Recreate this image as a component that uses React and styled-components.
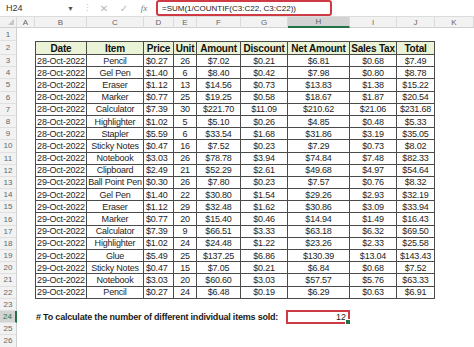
import React from "react";
import styled, { createGlobalStyle, css } from "styled-components";

// --- Global page reset ---
const GlobalStyle = createGlobalStyle`
  html, body {
    margin: 0;
    padding: 0;
    background: #ffffff;
    overflow: hidden;
  }
  body {
    font-family: "Liberation Sans", Arial, sans-serif;
  }
`;

// column widths: row-number, A, B ... J, K
const COLS = "17px 18px 52px 57px 30px 23px 44px 47px 62px 47px 38px 1fr";

const DATA = [
  ["28-Oct-2022", "Pencil", "$0.27", 26, "$7.02", "$0.21", "$6.81", "$0.68", "$7.49"],
  ["28-Oct-2022", "Gel Pen", "$1.40", 6, "$8.40", "$0.42", "$7.98", "$0.80", "$8.78"],
  ["28-Oct-2022", "Eraser", "$1.12", 13, "$14.56", "$0.73", "$13.83", "$1.38", "$15.22"],
  ["28-Oct-2022", "Marker", "$0.77", 25, "$19.25", "$0.58", "$18.67", "$1.87", "$20.54"],
  ["28-Oct-2022", "Calculator", "$7.39", 30, "$221.70", "$11.09", "$210.62", "$21.06", "$231.68"],
  ["28-Oct-2022", "Highlighter", "$1.02", 5, "$5.10", "$0.26", "$4.85", "$0.48", "$5.33"],
  ["28-Oct-2022", "Stapler", "$5.59", 6, "$33.54", "$1.68", "$31.86", "$3.19", "$35.05"],
  ["28-Oct-2022", "Sticky Notes", "$0.47", 16, "$7.52", "$0.23", "$7.29", "$0.73", "$8.02"],
  ["28-Oct-2022", "Notebook", "$3.03", 26, "$78.78", "$3.94", "$74.84", "$7.48", "$82.33"],
  ["28-Oct-2022", "Clipboard", "$2.49", 21, "$52.29", "$2.61", "$49.68", "$4.97", "$54.64"],
  ["29-Oct-2022", "Ball Point Pen", "$0.30", 26, "$7.80", "$0.23", "$7.57", "$0.76", "$8.32"],
  ["29-Oct-2022", "Gel Pen", "$1.40", 22, "$30.80", "$1.54", "$29.26", "$2.93", "$32.19"],
  ["29-Oct-2022", "Eraser", "$1.12", 29, "$32.48", "$1.62", "$30.86", "$3.09", "$33.94"],
  ["29-Oct-2022", "Marker", "$0.77", 20, "$15.40", "$0.46", "$14.94", "$1.49", "$16.43"],
  ["29-Oct-2022", "Calculator", "$7.39", 9, "$66.51", "$3.33", "$63.18", "$6.32", "$69.50"],
  ["29-Oct-2022", "Highlighter", "$1.02", 24, "$24.48", "$1.22", "$23.26", "$2.33", "$25.58"],
  ["29-Oct-2022", "Glue", "$5.49", 25, "$137.25", "$6.86", "$130.39", "$13.04", "$143.43"],
  ["29-Oct-2022", "Sticky Notes", "$0.47", 15, "$7.05", "$0.21", "$6.84", "$0.68", "$7.52"],
  ["29-Oct-2022", "Notebook", "$3.03", 20, "$60.60", "$3.03", "$57.57", "$5.76", "$63.33"],
  ["29-Oct-2022", "Pencil", "$0.27", 24, "$6.48", "$0.19", "$6.29", "$0.63", "$6.91"],
];

const HEADERS = ["Date", "Item", "Price", "Unit", "Amount", "Discount", "Net Amount", "Sales Tax", "Total"];
const LETTERS = ["A", "B", "C", "D", "E", "F", "G", "H", "I", "J", "K"];

// --- Layout ---
const Window = styled.div`
  width: 474px;
  height: 347px;
  display: flex;
  flex-direction: column;
  background: #ffffff;
  overflow: hidden;
`;

const TopStrip = styled.div`
  height: 4px;
  background: #e6e6e6;
`;

const FormulaRow = styled.div`
  height: 19px;
  display: flex;
  align-items: center;
  background: #ffffff;
  border-bottom: 1px solid #dcdcdc;
`;

const NameBox = styled.div`
  width: 80px;
  height: 100%;
  display: flex;
  align-items: center;
  justify-content: space-between;
  padding: 0 6px 0 6px;
  box-sizing: border-box;
  font-size: 9px;
  color: #333;
`;

const Caret = styled.span`
  font-size: 7px;
  color: #555;
`;

const Dots = styled.span`
  width: 14px;
  text-align: center;
  color: #c4c4c4;
  font-size: 9px;
`;

const BarIcon = styled.span`
  width: 20px;
  text-align: center;
  color: #b8b8b8;
  font-size: 10px;
  font-family: "DejaVu Sans", sans-serif;
`;

const FxIcon = styled.span`
  width: 20px;
  text-align: center;
  color: #777;
  font-size: 9px;
  font-style: italic;
  font-family: "Liberation Serif", serif;
`;

const FormulaInput = styled.div`
  width: 176px;
  height: 16px;
  margin-left: 2px;
  box-sizing: border-box;
  border: 2px solid #cf3b45;
  border-radius: 3px;
  display: flex;
  align-items: center;
  padding-left: 4px;
  font-size: 8px;
  color: #222;
  white-space: nowrap;
`;

const Gap = styled.div`
  height: 4px;
  background: #f2f2f2;
`;

const Sheet = styled.div`
  display: flex;
  flex-direction: column;
  flex: 1;
`;

const Row = styled.div`
  display: grid;
  grid-template-columns: ${COLS};
  height: ${(p) => p.$h}px;
  flex-shrink: 0;
`;

const ColHead = styled.div`
  display: flex;
  align-items: center;
  justify-content: center;
  font-size: 8px;
  color: #666;
  background: ${(p) => (p.$active ? "#d3d3d3" : "#f2f2f2")};
  border-right: 1px solid #dadada;
  border-bottom: ${(p) => (p.$active ? "2px solid #217346" : "1px solid #d0d0d0")};
  box-sizing: border-box;
`;

const Corner = styled.div`
  background: #f2f2f2;
  border-right: 1px solid #dadada;
  border-bottom: 1px solid #d0d0d0;
  box-sizing: border-box;
  display: flex;
  align-items: flex-end;
  justify-content: flex-end;
  padding: 0 2px 2px 0;
`;

const CornerTri = styled.div`
  width: 0;
  height: 0;
  border-left: 6px solid transparent;
  border-bottom: 6px solid #c6c6c6;
`;

const RowNum = styled.div`
  display: flex;
  align-items: center;
  justify-content: center;
  font-size: 8px;
  color: ${(p) => (p.$active ? "#217346" : "#666")};
  background: ${(p) => (p.$active ? "#d3d3d3" : "#f2f2f2")};
  border-right: ${(p) => (p.$active ? "2px solid #217346" : "1px solid #d0d0d0")};
  border-bottom: 1px solid #e0e0e0;
  box-sizing: border-box;
`;

const Blank = styled.div``;

const Cell = styled.div`
  box-sizing: border-box;
  display: flex;
  align-items: center;
  justify-content: ${(p) => (p.$align === "left" ? "flex-start" : "center")};
  padding: ${(p) => (p.$align === "left" ? "0 0 0 2px" : "0")};
  border-right: 1px solid #4a4a4a;
  border-bottom: 1px solid #4a4a4a;
  ${(p) => p.$first && css`border-left: 1px solid #4a4a4a;`}
  font-size: 9px;
  letter-spacing: -0.2px;
  color: #1e1e1e;
  white-space: nowrap;
  overflow: hidden;
`;

const HeadCell = styled(Cell)`
  border-top: 1px solid #4a4a4a;
  background: #ebf3d6;
  font-weight: bold;
  font-size: 10px;
  letter-spacing: -0.2px;
  color: #111;
`;

const Note = styled.div`
  grid-column: 3 / 9;
  display: flex;
  align-items: center;
  font-size: 9px;
  font-weight: bold;
  letter-spacing: -0.2px;
  color: #1a1a1a;
  white-space: nowrap;
  padding-left: 1px;
`;

const Selected = styled.div`
  position: relative;
  margin: -1px 0 -1px -2px;
  border: 2px solid #cf3b45;
  display: flex;
  align-items: center;
  justify-content: flex-end;
  padding-right: 2px;
  font-size: 9px;
  color: #1e1e1e;
`;

const FillHandle = styled.span`
  position: absolute;
  right: -3px;
  bottom: -3px;
  width: 4px;
  height: 4px;
  background: #217346;
  border: 1px solid #fff;
`;

const ALIGN = ["center", "center", "left", "center", "center", "center", "center", "center", "center"];

function DataRow({ n, values }) {
  return (
    <Row $h={12.2}>
      <RowNum>{n}</RowNum>
      <Blank />
      {values.map((v, i) => (
        <Cell key={i} $first={i === 0} $align={ALIGN[i]}>
          {v}
        </Cell>
      ))}
      <Blank />
    </Row>
  );
}

export default function App() {
  return (
    <>
      <GlobalStyle />
      <Window>
        <TopStrip />
        <FormulaRow>
          <NameBox>
            H24 <Caret>▼</Caret>
          </NameBox>
          <Dots>⋮</Dots>
          <BarIcon>✕</BarIcon>
          <BarIcon>✓</BarIcon>
          <FxIcon>fx</FxIcon>
          <FormulaInput>=SUM(1/COUNTIF(C3:C22, C3:C22))</FormulaInput>
        </FormulaRow>
        <Gap />
        <Sheet>
          <Row $h={11}>
            <Corner>
              <CornerTri />
            </Corner>
            {LETTERS.map((l) => (
              <ColHead key={l} $active={l === "H"}>
                {l}
              </ColHead>
            ))}
          </Row>
          <Row $h={13}>
            <RowNum>1</RowNum>
          </Row>
          <Row $h={14}>
            <RowNum>2</RowNum>
            <Blank />
            {HEADERS.map((h, i) => (
              <HeadCell key={h} $first={i === 0}>
                {h}
              </HeadCell>
            ))}
            <Blank />
          </Row>
          {DATA.map((r, i) => (
            <DataRow key={i} n={i + 3} values={r} />
          ))}
          <Row $h={12.2}>
            <RowNum>23</RowNum>
          </Row>
          <Row $h={12.2}>
            <RowNum $active>24</RowNum>
            <Blank />
            <Note># To calculate the number of different individual items sold:</Note>
            <Selected>
              12
              <FillHandle />
            </Selected>
          </Row>
          <Row $h={12.2}>
            <RowNum>25</RowNum>
          </Row>
          <Row $h={12.2}>
            <RowNum>26</RowNum>
          </Row>
        </Sheet>
      </Window>
    </>
  );
}
